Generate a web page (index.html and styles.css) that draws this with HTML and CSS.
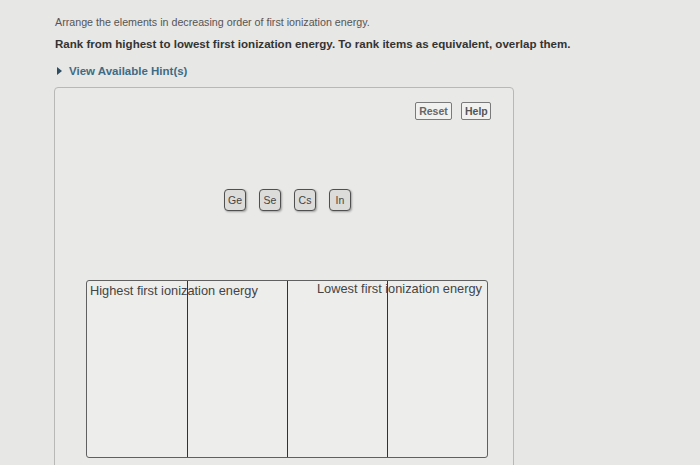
FILE: index.html
```html
<!DOCTYPE html>
<html>
<head>
<meta charset="utf-8">
<link rel="stylesheet" href="styles.css">
</head>
<body>
<div class="page">
  <p class="intro">Arrange the elements in decreasing order of first ionization energy.</p>
  <p class="rank">Rank from highest to lowest first ionization energy. To rank items as equivalent, overlap them.</p>
  <div class="hint"><span class="tri"></span><span>View Available Hint(s)</span></div>
  <div class="panel">
    <div class="actions">
      <button class="btn reset">Reset</button>
      <button class="btn help">Help</button>
    </div>
    <div class="tiles">
      <div class="tile">Ge</div>
      <div class="tile">Se</div>
      <div class="tile">Cs</div>
      <div class="tile">In</div>
    </div>
    <div class="bins">
      <div class="bin first"><span class="label">Highest first ionization energy</span></div>
      <div class="bin"></div>
      <div class="bin"></div>
      <div class="bin last"><span class="label">Lowest first ionization energy</span></div>
    </div>
  </div>
</div>
</body>
</html>
```

FILE: styles.css
```css
html, body {
  margin: 0;
  padding: 0;
  background: #e7e7e5;
  height: 100%;
  overflow: hidden;
}
.page {
  padding: 14px 0 0 54px;
  font-family: "Liberation Sans", Arial, sans-serif;
}
.intro {
  margin: 0;
  padding-left: 1px;
  font-size: 10.7px;
  line-height: 16px;
  color: #555;
}
.rank {
  margin: 6px 0 0;
  padding-left: 1px;
  font-size: 11.55px;
  line-height: 16px;
  font-weight: bold;
  color: #333;
}
.hint {
  margin-top: 11px;
  padding-left: 3px;
  display: flex;
  align-items: center;
  gap: 7px;
  height: 16px;
  font-size: 11.5px;
  font-weight: bold;
  color: #3d6c85;
}
.tri {
  width: 0;
  height: 0;
  border-top: 4px solid transparent;
  border-bottom: 4px solid transparent;
  border-left: 5px solid #2e4d63;
}
.panel {
  margin-top: 8px;
  width: 460px;
  height: 400px;
  border: 1px solid #b8b8b6;
  border-radius: 4px;
  background: #e9e9e7;
  box-sizing: border-box;
}
.actions {
  display: flex;
  justify-content: flex-end;
  gap: 9px;
  padding: 14px 22px 0 0;
}
.btn {
  height: 18px;
  padding: 0 3px;
  font-family: "Liberation Sans", Arial, sans-serif;
  font-size: 10.5px;
  font-weight: bold;
  color: #555;
  background: #f1f1ef;
  border: 1px solid #7a7a7a;
  border-radius: 2px;
  line-height: 16px;
}
.reset { color: #666; width: 37px; }
.help { width: 30px; }
.tiles {
  display: flex;
  gap: 13px;
  padding: 69px 0 0 169px;
}
.tile {
  width: 22px;
  height: 22px;
  box-sizing: border-box;
  border: 1.5px solid #505050;
  border-radius: 4px;
  background: #dcdcda;
  box-shadow: 1px 1px 2px rgba(0,0,0,0.3);
  font-size: 10.5px;
  color: #444;
  display: flex;
  align-items: center;
  justify-content: center;
}
.bins {
  margin: 69px 0 0 31px;
  width: 402px;
  height: 178px;
  box-sizing: border-box;
  border: 1.5px solid #606060;
  border-radius: 3px;
  background: #ededeb;
  display: grid;
  grid-template-columns: repeat(4, minmax(0, 1fr));
}
.bin {
  position: relative;
  min-width: 0;
  border-left: 1.5px solid #333;
  display: flex;
  padding: 3px 3px 0;
}
.bin.first {
  border-left: none;
}
.bin.last {
  justify-content: flex-end;
  padding-right: 5px;
  padding-top: 1px;
}
.label {
  flex: none;
  white-space: nowrap;
  font-size: 12.8px;
  line-height: 14px;
  color: #444;
  height: 14px;
}
```
